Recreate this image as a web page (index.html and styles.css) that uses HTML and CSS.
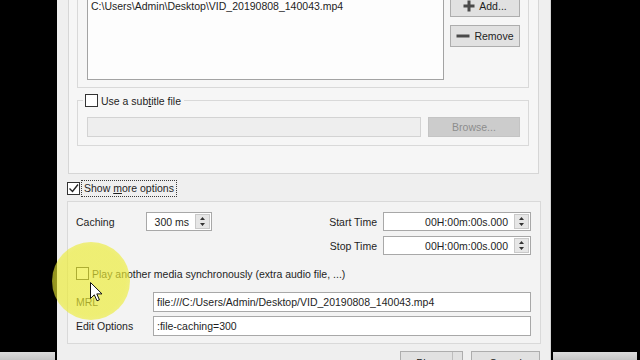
FILE: index.html
```html
<!DOCTYPE html>
<html lang="en">
<head>
  <meta charset="UTF-8" />
  <meta name="viewport" content="width=device-width, initial-scale=1" />
  <title>Open Media</title>
  <link rel="stylesheet" href="styles.css">
</head>
<body>
  <div class="desk">
    <div class="window">

      <div class="tab-page">
        <div class="group files">
          <div class="file-list">C:\Users\Admin\Desktop\VID_20190808_140043.mp4</div>
          <div class="file-buttons">
            <button class="btn">
              <svg width="12" height="12" viewBox="0 0 12 12"><path d="M6 0.5v11M0.5 6h11" stroke="#4a4a4a" stroke-width="3"/></svg>
              Add...
            </button>
            <button class="btn">
              <svg width="14" height="12" viewBox="0 0 14 12"><path d="M0.5 6h13" stroke="#4a4a4a" stroke-width="3"/></svg>
              Remove
            </button>
          </div>
        </div>

        <div class="group subtitle">
          <div class="legend">
            <span class="check"></span>
            <span>Use a sub<u>t</u>itle file</span>
          </div>
          <div class="sub-row">
            <div class="field off"></div>
            <button class="btn off">Browse...</button>
          </div>
        </div>
      </div>

      <div class="more-toggle">
        <span class="check">
          <svg width="11" height="11" viewBox="0 0 11 11"><path d="M1.5 5.5l3 3 5.5-7" fill="none" stroke="#222" stroke-width="1.4"/></svg>
        </span>
        <span class="focus">Show <u>m</u>ore options</span>
      </div>

      <div class="group more">
        <div class="timing">
          <div class="lbl">Caching</div>
          <div class="spin">
            <span class="spin-val">300 ms</span>
            <span class="arrows">
              <svg width="7" height="13" viewBox="0 0 7 13"><path d="M3.5 2L6 5H1zM3.5 11L6 8H1z" fill="#333"/></svg>
            </span>
          </div>
          <div class="lbl right">Start Time</div>
          <div class="spin">
            <span class="spin-val">00H:00m:00s.000</span>
            <span class="arrows">
              <svg width="7" height="13" viewBox="0 0 7 13"><path d="M3.5 2L6 5H1zM3.5 11L6 8H1z" fill="#333"/></svg>
            </span>
          </div>
          <div class="lbl right stop">Stop Time</div>
          <div class="spin">
            <span class="spin-val">00H:00m:00s.000</span>
            <span class="arrows">
              <svg width="7" height="13" viewBox="0 0 7 13"><path d="M3.5 2L6 5H1zM3.5 11L6 8H1z" fill="#333"/></svg>
            </span>
          </div>
        </div>

        <div class="sync-row">
          <span class="check"></span>
          <span>Play another media synchronously (extra audio file, ...)</span>
        </div>

        <div class="mrl">
          <div class="lbl">MRL</div>
          <div class="field">file:///C:/Users/Admin/Desktop/VID_20190808_140043.mp4</div>
          <div class="lbl">Edit Options</div>
          <div class="field">:file-caching=300</div>
        </div>
      </div>

      <div class="actions">
        <button class="btn big play"><span class="play-text"><u>P</u>lay</span><span class="drop"></span></button>
        <button class="btn big cancel">Cancel</button>
      </div>
    </div>
  </div>

  <div class="strip strip-left"></div>
  <div class="strip strip-right"></div>

  <div class="halo"></div>
  <svg class="cursor" width="13" height="20" viewBox="0 0 13 20">
    <path d="M0.5 0.5V16.5L4.3 12.8L7 18.8L9.4 17.8L6.8 11.9H12Z" fill="#fff" stroke="#111" stroke-width="1"/>
  </svg>
</body>
</html>
```

FILE: styles.css
```css
body {
  margin: 0;
  width: 640px;
  height: 360px;
  overflow: hidden;
  background: #000;
  font-family: 'Liberation Sans', Arial, sans-serif;
  font-size: 10.5px;
  color: #1e1e1e;
  position: relative;
}

.desk {
  display: flex;
  padding-left: 57px;
}

.window {
  width: 494px;
  height: 400px;
  margin-top: -20px;
  padding: 0 9px 0 10px;
  box-sizing: border-box;
  background: #efefef;
  border-right: 1px solid #d4d4d4;
}

.tab-page {
  width: 471px;
  height: 194px;
  margin-left: 1px;
  padding: 0 9px 0 8px;
  box-sizing: border-box;
  background: #f6f6f6;
  border: 1px solid #d6d6d6;
}

.group {
  border: 1px solid #d9d9d9;
  box-sizing: border-box;
}

.files {
  display: flex;
  align-items: flex-start;
  margin-top: 4px;
  padding: 4px 8px 7px 9px;
}

.file-list {
  width: 357px;
  height: 90px;
  box-sizing: border-box;
  padding: 9px 3px;
  background: #fdfdfd;
  border: 1px solid #a3a3a3;
  line-height: 12px;
}

.file-buttons {
  display: flex;
  flex-direction: column;
  gap: 8px;
  margin: 5px 0 0 6px;
}

.btn {
  font-family: inherit;
  font-size: inherit;
  color: #1e1e1e;
  width: 70px;
  height: 22px;
  padding: 0;
  display: flex;
  align-items: center;
  justify-content: center;
  gap: 4px;
  background: #e1e1e1;
  border: 1px solid #adadad;
  box-sizing: border-box;
}

.btn svg {
  display: block;
}

.subtitle {
  margin-top: 12px;
  padding: 0 8px 8px 5px;
}

.legend {
  display: flex;
  align-items: center;
  gap: 3px;
  width: max-content;
  height: 13px;
  margin-top: -7px;
  padding: 0 3px 0 2px;
  background: #f6f6f6;
}

.check {
  width: 13px;
  height: 13px;
  box-sizing: border-box;
  border: 1px solid #333;
  background: #fff;
  display: flex;
  align-items: center;
  justify-content: center;
  flex-shrink: 0;
}

.sub-row {
  display: flex;
  gap: 7px;
  margin: 10px 0 0 4px;
}

.field {
  height: 20px;
  box-sizing: border-box;
  padding: 0 3px;
  line-height: 18px;
  background: #fff;
  border: 1px solid #a8a8a8;
  white-space: nowrap;
  overflow: hidden;
}

.field.off {
  width: 334px;
  background: #eeeeee;
  border-color: #d3d3d3;
}

.btn.off {
  width: 92px;
  height: 20px;
  color: #8c8c8c;
  background: #cccccc;
  border-color: #c4c4c4;
}

.more-toggle {
  display: flex;
  align-items: center;
  gap: 1px;
  height: 17px;
  margin-top: 6px;
}

.focus {
  padding: 0 2px;
  line-height: 15px;
  border: 1px dotted #3a3a3a;
}

.more {
  margin-top: 4px;
  padding: 10px 9px 7px 8px;
  background: #f3f3f3;
}

.timing {
  display: grid;
  grid-template-columns: 70px 66px 1fr 148px;
  grid-auto-rows: 19px;
  row-gap: 5px;
}

.lbl {
  display: flex;
  align-items: center;
  white-space: nowrap;
}

.lbl.right {
  justify-content: flex-end;
  padding-right: 6px;
}

.lbl.stop {
  grid-column: 3;
}

.spin {
  display: flex;
  align-items: stretch;
  background: #fff;
  border: 1px solid #a8a8a8;
  box-sizing: border-box;
}

.spin-val {
  flex: 1;
  display: flex;
  align-items: center;
  justify-content: flex-end;
  padding-right: 5px;
}

.arrows {
  width: 13px;
  margin: 1px;
  display: flex;
  align-items: center;
  justify-content: center;
  background: #e6e6e6;
  border: 1px solid #c9c9c9;
}

.sync-row {
  display: flex;
  align-items: center;
  gap: 3px;
  height: 13px;
  margin-top: 12px;
}

.mrl {
  display: grid;
  grid-template-columns: 77px 1fr;
  grid-auto-rows: 20px;
  row-gap: 4px;
  margin-top: 12px;
}

.actions {
  display: flex;
  justify-content: flex-end;
  gap: 8px;
  margin: 7px 1px 0 0;
}

.btn.big {
  height: 23px;
}

.play {
  width: 63px;
  justify-content: flex-start;
  gap: 0;
}

.play-text {
  width: 51px;
  text-align: center;
}

.drop {
  height: 100%;
  border-left: 1px solid #bdbdbd;
}

.cancel {
  width: 69px;
}

/* bits of other windows behind the dialog */
.strip {
  position: absolute;
  top: 352px;
  height: 8px;
  background: linear-gradient(#dcdcdc, #c6c6c6);
}

.strip-left {
  left: 0;
  width: 55px;
}

.strip-right {
  left: 553px;
  width: 84px;
}

/* click highlight from the screen recorder */
.halo {
  position: absolute;
  left: 52px;
  top: 242px;
  width: 78px;
  height: 78px;
  border-radius: 50%;
  background: radial-gradient(circle, rgba(236, 236, 50, 0.66) 62%, rgba(236, 236, 50, 0.5) 88%, rgba(236, 236, 50, 0) 100%);
}

.cursor {
  position: absolute;
  left: 90px;
  top: 282px;
}
```
